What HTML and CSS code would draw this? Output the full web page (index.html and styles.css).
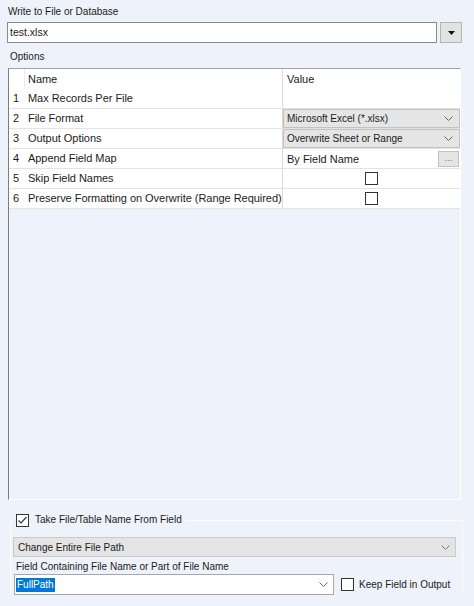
FILE: index.html
```html
<!DOCTYPE html>
<html>
<head>
<meta charset="utf-8">
<link rel="stylesheet" href="styles.css">
</head>
<body>
<div class="page">
  <div class="title">Write to File or Database</div>
  <div class="filerow">
    <div class="textbox">test.xlsx</div>
    <div class="dropbtn"><svg width="7" height="4" viewBox="0 0 7 4"><path d="M0 0H7L3.5 4Z" fill="#111"/></svg></div>
  </div>
  <div class="options-label">Options</div>
  <div class="grid">
    <div class="row head">
      <div class="num"></div>
      <div class="name">Name</div>
      <div class="val head-val">Value</div>
    </div>
    <div class="row">
      <div class="num">1</div>
      <div class="name">Max Records Per File</div>
      <div class="val blank"></div>
    </div>
    <div class="row">
      <div class="num">2</div>
      <div class="name">File Format</div>
      <div class="val"><div class="combo"><span>Microsoft Excel (*.xlsx)</span><svg class="chev" width="9" height="5" viewBox="0 0 9 5"><path d="M0.5 0.5L4.5 4.5L8.5 0.5" stroke="#666" fill="none"/></svg></div></div>
    </div>
    <div class="row">
      <div class="num">3</div>
      <div class="name">Output Options</div>
      <div class="val"><div class="combo"><span>Overwrite Sheet or Range</span><svg class="chev" width="9" height="5" viewBox="0 0 9 5"><path d="M0.5 0.5L4.5 4.5L8.5 0.5" stroke="#666" fill="none"/></svg></div></div>
    </div>
    <div class="row">
      <div class="num">4</div>
      <div class="name">Append Field Map</div>
      <div class="val"><div class="textval"><span>By Field Name</span><div class="ellipsis">...</div></div></div>
    </div>
    <div class="row">
      <div class="num">5</div>
      <div class="name">Skip Field Names</div>
      <div class="val center"><div class="check"></div></div>
    </div>
    <div class="row">
      <div class="num">6</div>
      <div class="name">Preserve Formatting on Overwrite (Range Required)</div>
      <div class="val center"><div class="check"></div></div>
    </div>
  </div>
  <fieldset class="group">
    <legend class="legend"><span class="check checked"><svg width="11" height="11" viewBox="0 0 11 11"><path d="M1.5 5.5L4 8L9.5 2" stroke="#333" stroke-width="1.2" fill="none"/></svg></span><span>Take File/Table Name From Field</span></legend>
    <div class="combo wide"><span>Change Entire File Path</span><svg class="chev" width="9" height="5" viewBox="0 0 9 5"><path d="M0.5 0.5L4.5 4.5L8.5 0.5" stroke="#777" fill="none"/></svg></div>
    <div class="field-label">Field Containing File Name or Part of File Name</div>
    <div class="fieldrow">
      <div class="fieldbox"><span class="sel">FullPath</span><svg class="chev" width="9" height="5" viewBox="0 0 9 5"><path d="M0.5 0.5L4.5 4.5L8.5 0.5" stroke="#666" fill="none"/></svg></div>
      <div class="check"></div>
      <span class="keep">Keep Field in Output</span>
    </div>
  </fieldset>
</div>
</body>
</html>
```
FILE: styles.css
```css
html, body {
  margin: 0;
  padding: 0;
  background: #eef2fa;
}
body {
  font-family: "Liberation Sans", Arial, sans-serif;
  font-size: 11px;
  color: #1b1b1b;
  overflow: hidden;
}
.page {
  padding: 4px 12px 0 7px;
}
.title {
  font-size: 10px;
  line-height: 16px;
  padding-left: 1px;
}
.filerow {
  margin-top: 2px;
  display: flex;
  gap: 3px;
  height: 21px;
}
.textbox {
  flex: 1;
  box-sizing: border-box;
  background: #fff;
  border: 1px solid #8a8a8a;
  padding-left: 2px;
  font-size: 10.5px;
  line-height: 19px;
}
.dropbtn {
  width: 22px;
  box-sizing: border-box;
  background: #e3e3e3;
  border: 1px solid #b5b5b5;
  display: flex;
  align-items: center;
  justify-content: center;
}
.options-label {
  margin-top: 6px;
  font-size: 10px;
  line-height: 16px;
  padding-left: 3px;
}
.grid {
  margin: 3px 1px 0 1px;
  height: 432px;
  box-sizing: border-box;
  border-top: 1px solid #a0a0a0;
  border-left: 1px solid #7c7c7c;
  border-right: 1px solid #ffffff;
  border-bottom: 1px solid #ffffff;
}
.row {
  display: grid;
  grid-template-columns: 16px 258px 1fr;
  height: 20px;
  box-sizing: border-box;
  background: #fff;
  border-bottom: 1px solid #e3e3e3;
}
.row.head {
  border-bottom: none;
}
.num {
  padding-left: 4px;
  line-height: 19px;
}
.head .num {
  border-right: 1px solid #ececec;
  box-sizing: border-box;
}
.name {
  padding-left: 3px;
  line-height: 19px;
  border-right: 1px solid #d9d9d9;
  white-space: nowrap;
  letter-spacing: -0.04px;
}
.head .name {
  line-height: 20px;
}
.val {
  position: relative;
  min-width: 0;
}
.head-val {
  padding-left: 4px;
  line-height: 20px;
}
.center {
  display: flex;
  align-items: center;
  justify-content: center;
}
.combo {
  box-sizing: border-box;
  height: 19px;
  background: #e5e5e5;
  border: 1px solid #c2c2c2;
  display: flex;
  align-items: center;
  justify-content: space-between;
  padding: 0 6px 0 3px;
  font-size: 10px;
}
.chev {
  display: block;
}
.textval {
  height: 19px;
  display: flex;
  align-items: center;
  justify-content: space-between;
  padding: 0 1px 0 4px;
}
.ellipsis {
  width: 21px;
  height: 16px;
  box-sizing: border-box;
  background: #e5e5e5;
  border: 1px solid #c2c2c2;
  font-size: 9px;
  color: #777;
  text-align: center;
  line-height: 12px;
}
.check {
  width: 13px;
  height: 13px;
  box-sizing: border-box;
  border: 1px solid #333;
  background: #fff;
  display: inline-flex;
  align-items: center;
  justify-content: center;
  flex-shrink: 0;
}
.group {
  margin: 13px -1px 0 3px;
  padding: 0 6px 0 1px;
  border: 1px solid #fdfdff;
  border-bottom: none;
  min-width: 0;
  font-size: 10px;
}
.legend {
  margin-left: 2px;
  padding: 0 4px 0 2px;
  display: flex;
  align-items: center;
  gap: 6px;
  line-height: 14px;
}
.combo.wide {
  margin-top: 10px;
  margin-left: 1px;
  height: 20px;
  background: #e4e4e4;
  border-color: #cacaca;
  padding: 0 5px 0 4px;
}
.field-label {
  margin-top: 2px;
  line-height: 15px;
  padding-left: 4px;
}
.fieldrow {
  display: flex;
  align-items: center;
}
.fieldbox {
  width: 320px;
  height: 21px;
  box-sizing: border-box;
  margin-left: 2px;
  background: #fff;
  border: 1px solid #a8a8a8;
  display: flex;
  align-items: center;
  justify-content: space-between;
  padding: 0 5px 0 1px;
}
.sel {
  background: #0078d7;
  color: #fff;
  line-height: 14px;
  padding: 0 1px;
}
.fieldrow .check {
  margin-left: 7px;
}
.keep {
  margin-left: 5px;
  white-space: nowrap;
}
```
